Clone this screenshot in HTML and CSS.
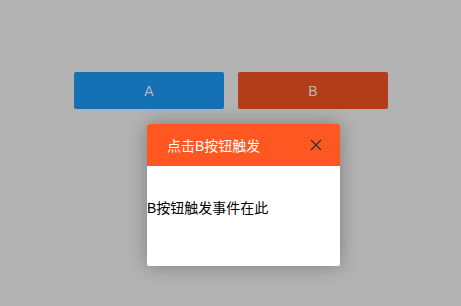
FILE: index.html
```html
<!DOCTYPE html>
<html>
<head>
  <title>弹窗示例</title>
  <link rel="stylesheet" href="styles.css">
</head>
<body>
  <div class="btn-row">
    <button class="btn btn-a" type="button">A</button>
    <button class="btn btn-b" type="button">B</button>
  </div>

  <div class="dialog">
    <div class="dialog-header">
      <span class="dialog-title">点击B按钮触发</span>
      <span class="dialog-close">
        <svg width="12" height="12" viewBox="0 0 12 12">
          <path d="M1 1 L11 11 M11 1 L1 11" stroke="#333" stroke-width="1.4" fill="none"/>
        </svg>
      </span>
    </div>
    <div class="dialog-body">B按钮触发事件在此</div>
  </div>
</body>
</html>
```

FILE: styles.css
```css
body {
  margin: 0;
  width: 461px;
  height: 306px;
  background-color: #b3b3b3;
  font-family: Arial, "Liberation Sans", "Noto Sans CJK SC", sans-serif;
  overflow: hidden;
}

.btn-row {
  display: flex;
  gap: 14px;
  padding: 72px 0 0 74px;
}

.btn {
  width: 150px;
  height: 37px;
  border: none;
  border-radius: 2px;
  color: #b8b8b8;
  font-family: Arial, "Liberation Sans", sans-serif;
  font-size: 14px;
  padding: 0;
}

.btn-a {
  background-color: #1670b4;
}

.btn-b {
  background-color: #b33d1a;
}

.dialog {
  position: absolute;
  left: 147px;
  top: 124px;
  width: 193px;
  height: 142px;
  background-color: #ffffff;
  border-radius: 2px;
  box-shadow: 0 0 20px rgba(0, 0, 0, 0.3);
  overflow: hidden;
}

.dialog-header {
  height: 42px;
  background-color: #ff5722;
  display: flex;
  align-items: center;
  justify-content: space-between;
  padding: 0 18px 0 20px;
}

.dialog-title {
  color: #ffffff;
  font-size: 14px;
}

.dialog-close {
  display: flex;
}

.dialog-body {
  padding-top: 31px;
  font-size: 14px;
  color: #000000;
}
```
